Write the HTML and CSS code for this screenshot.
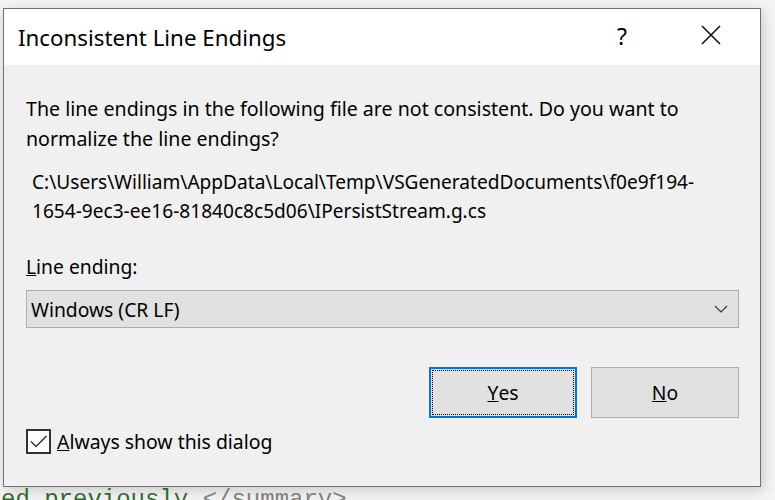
FILE: index.html
```html
<!DOCTYPE html>
<html>
<head>
<meta charset="utf-8">
<link rel="stylesheet" href="styles.css">
</head>
<body>
<div class="desktop">
  <div class="dialog">
    <div class="titlebar">
      <div class="title">Inconsistent Line Endings</div>
      <div class="help">?</div>
      <div class="close">
        <svg width="22" height="22" viewBox="0 0 22 22"><path d="M2 2 L20 20 M20 2 L2 20" stroke="#111" stroke-width="1.6" fill="none"/></svg>
      </div>
    </div>
    <div class="body">
      <p class="message">The line endings in the following file are not consistent. Do you want to normalize the line endings?</p>
      <p class="path">C:\Users\William\AppData\Local\Temp\VSGeneratedDocuments\f0e9f194-<br>1654-9ec3-ee16-81840c8c5d06\IPersistStream.g.cs</p>
      <div class="label"><u>L</u>ine ending:</div>
      <div class="select">
        <span>Windows (CR LF)</span>
        <svg width="14" height="8" viewBox="0 0 14 8"><path d="M1 1 L7 7 L13 1" stroke="#333" stroke-width="1.1" fill="none"/></svg>
      </div>
      <div class="buttons">
        <div class="btn btn-default"><div class="focus"><u>Y</u>es</div></div>
        <div class="btn"><u>N</u>o</div>
      </div>
      <div class="check">
        <div class="box">
          <svg width="21" height="21" viewBox="0 0 21 21"><path d="M3 10.5 L8 15.5 L18.5 5" stroke="#333" stroke-width="1.5" fill="none"/></svg>
        </div>
        <span><u>A</u>lways show this dialog</span>
      </div>
    </div>
  </div>
  <div class="code"><span class="comment">ed previously</span> <span class="tag">&lt;/summary&gt;</span></div>
</div>
</body>
</html>
```

FILE: styles.css
```css
html, body {
  margin: 0;
  padding: 0;
}
body {
  width: 775px;
  height: 500px;
  overflow: hidden;
  background: #f4f4f4;
  font-family: "Segoe UI", "Noto Sans", "Open Sans", sans-serif;
  color: #000;
}
.desktop {
  padding: 8px 0 0 3px;
}
.dialog {
  width: 756px;
  height: 477px;
  border: 1px solid #707070;
  background: #f0f0f0;
  box-shadow: 2px 3px 12px rgba(0,0,0,0.18);
  display: flex;
  flex-direction: column;
}
.titlebar {
  height: 56px;
  background: #fff;
  display: flex;
  align-items: center;
}
.title {
  padding-left: 14px;
  font-size: 22.3px;
  flex: 1;
  margin-top: 1px;
}
.help {
  width: 48px;
  text-align: center;
  font-size: 23px;
  margin-right: 54px;
  margin-top: -2px;
}
.close {
  width: 22px;
  margin-right: 38px;
  display: flex;
  margin-top: -4px;
}
.body {
  padding: 29px 21px 0 22px;
}
.message {
  margin: 0;
  font-size: 19.6px;
  line-height: 30px;
}
.path {
  margin: 14px 0 0 6px;
  font-size: 19.1px;
  line-height: 29px;
}
.label {
  margin-top: 29px;
  font-size: 19.3px;
  line-height: 24px;
}
.select {
  margin-top: 11px;
  height: 36px;
  border: 1px solid #adadad;
  background: #e1e1e1;
  display: flex;
  align-items: center;
  justify-content: space-between;
  padding: 0 10px 0 4px;
  font-size: 19.3px;
}
.buttons {
  display: flex;
  justify-content: flex-end;
  gap: 14px;
  margin-top: 39px;
}
.btn {
  border: 1px solid #adadad;
  background: #e1e1e1;
  display: flex;
  align-items: center;
  justify-content: center;
  font-size: 19.3px;
  box-sizing: border-box;
  width: 148px;
  height: 51px;
}
.btn-default {
  border: 2px solid #0078d7;
  padding: 1px;
}
.focus {
  width: 100%;
  height: 100%;
  border: 1px dotted #000;
  box-sizing: border-box;
  display: flex;
  align-items: center;
  justify-content: center;
}
.check {
  display: flex;
  align-items: center;
  margin-top: 10px;
  font-size: 19.4px;
}
.box {
  width: 21px;
  height: 21px;
  border: 2px solid #333;
  background: #fff;
  margin-right: 6px;
  display: flex;
}
.code {
  font-family: "Liberation Mono", monospace;
  font-size: 24px;
  line-height: 24px;
  margin-top: 1px;
  margin-left: -2px;
  white-space: pre;
}
.comment { color: #2e6b2e; }
.tag { color: #808080; }
```
